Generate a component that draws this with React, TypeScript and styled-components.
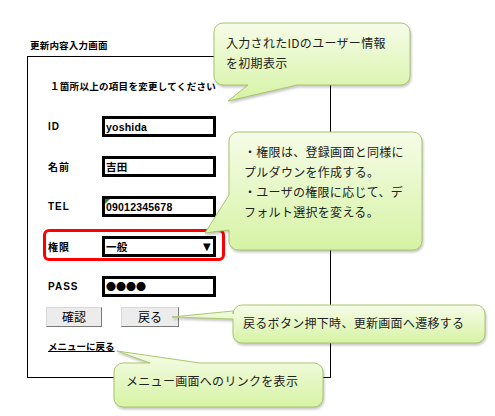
import React from "react";
import styled, { createGlobalStyle } from "styled-components";

const GlobalStyle = createGlobalStyle`
  html, body {
    margin: 0;
    padding: 0;
    background: #fff;
  }
  body {
    font-family: "Noto Sans CJK JP", "Liberation Sans", sans-serif;
    color: #000;
  }
`;

const Page = styled.div`
  position: relative;
  width: 495px;
  height: 416px;
  overflow: hidden;
  padding-left: 27px;
  box-sizing: border-box;
  background: #fff;
`;

const ScreenTitle = styled.div`
  margin-top: 39px;
  margin-bottom: 5px;
  padding-left: 3px;
  height: 12px;
  line-height: 12px;
  font-size: 9.5px;
  font-weight: 700;
  letter-spacing: 0.2px;
`;

const Panel = styled.div`
  width: 304px;
  box-sizing: border-box;
  border: 1px solid #000;
  padding: 22px 0 22px 20px;
`;

const Notice = styled.div`
  padding-left: 2px;
  height: 14px;
  line-height: 14px;
  font-size: 9.5px;
  font-weight: 700;
  letter-spacing: 0.3px;
  white-space: nowrap;
`;

const FormRow = styled.div<{ $first?: boolean }>`
  position: relative;
  display: flex;
  align-items: center;
  width: 168px;
  height: 21px;
  margin-top: ${(p) => (p.$first ? "23px" : "19px")};
`;

const Label = styled.span`
  width: 54px;
  font-size: 10px;
  font-weight: 700;
  letter-spacing: 1px;
  font-family: "Liberation Sans", "Noto Sans CJK JP", sans-serif;
`;

const Field = styled.div<{ $flag?: boolean }>`
  position: relative;
  display: flex;
  align-items: center;
  justify-content: space-between;
  width: 114px;
  height: 21px;
  box-sizing: border-box;
  border: 3px solid #000;
  padding: 0 2px 0 1px;
  font-family: "Liberation Sans", "Noto Sans CJK JP", sans-serif;
  font-size: 10.5px;
  font-weight: 700;
  letter-spacing: 0.2px;

  &::before {
    content: "";
    display: ${(p) => (p.$flag ? "block" : "none")};
    position: absolute;
    left: 0;
    top: 0;
    border-top: 5px solid #1e8a2e;
    border-right: 5px solid transparent;
  }
`;

const Dots = styled.span`
  font-family: "Noto Sans CJK JP", sans-serif;
  font-size: 10px;
  letter-spacing: 0;
`;

const Arrow = styled.span`
  font-size: 10px;
  line-height: 1;
  font-family: "DejaVu Sans", sans-serif;
`;

const Highlight = styled.div`
  position: absolute;
  left: -5px;
  top: -7px;
  width: 182px;
  height: 32px;
  box-sizing: border-box;
  border: 3px solid #ff0000;
  border-radius: 6px;
  pointer-events: none;
`;

const ButtonRow = styled.div`
  display: flex;
  gap: 19px;
  margin: 10px 0 0 -2px;
`;

const Button = styled.button<{ $w: number }>`
  width: ${(p) => p.$w}px;
  height: 20px;
  padding: 0;
  box-sizing: border-box;
  background: #ececec;
  border: 1px solid;
  border-color: #d8d8d8 #7a7a7a #7a7a7a #d8d8d8;
  font-family: "Noto Sans CJK JP", sans-serif;
  font-size: 12px;
  line-height: 18px;
  color: #000;
`;

const BackLink = styled.a`
  display: inline-block;
  margin-top: 12px;
  height: 14px;
  line-height: 14px;
  font-size: 9.5px;
  font-weight: 700;
  color: #000;
  text-decoration: underline;
`;

/* ---------- callouts ---------- */

type Tail = {
  side: "top" | "bottom" | "left";
  from: number;
  to: number;
  tip: [number, number];
};

const bubblePath = (w: number, h: number, r: number, t: Tail) => {
  const [tx, ty] = t.tip;
  let d = `M ${r} 0`;
  if (t.side === "top") d += ` H ${t.from} L ${tx} ${ty} L ${t.to} 0`;
  d += ` H ${w - r} A ${r} ${r} 0 0 1 ${w} ${r} V ${h - r} A ${r} ${r} 0 0 1 ${w - r} ${h}`;
  if (t.side === "bottom") d += ` H ${t.to} L ${tx} ${ty} L ${t.from} ${h}`;
  d += ` H ${r} A ${r} ${r} 0 0 1 0 ${h - r}`;
  if (t.side === "left") d += ` V ${t.to} L ${tx} ${ty} L 0 ${t.from}`;
  d += ` V ${r} A ${r} ${r} 0 0 1 ${r} 0 Z`;
  return d;
};

const CalloutBox = styled.div<{ $x: number; $y: number; $w: number; $h: number }>`
  position: absolute;
  left: ${(p) => p.$x}px;
  top: ${(p) => p.$y}px;
  width: ${(p) => p.$w}px;
  height: ${(p) => p.$h}px;
`;

const CalloutShape = styled.svg`
  position: absolute;
  left: 0;
  top: 0;
  overflow: visible;
  filter: drop-shadow(1px 2px 1.2px rgba(0, 0, 0, 0.22));
`;

const CalloutText = styled.div<{ $pad: string }>`
  position: relative;
  padding: ${(p) => p.$pad};
  font-family: "Noto Sans CJK JP", sans-serif;
  font-size: 12px;
  line-height: 20px;
  letter-spacing: 0.3px;
  color: #222;
  white-space: nowrap;
`;

type CalloutProps = {
  id: string;
  x: number;
  y: number;
  w: number;
  h: number;
  pad: string;
  tail: Tail;
  children: React.ReactNode;
};

const Callout = ({ id, x, y, w, h, pad, tail, children }: CalloutProps) => (
  <CalloutBox $x={x} $y={y} $w={w} $h={h}>
    <CalloutShape width={w} height={h}>
      <defs>
        <linearGradient id={id} x1="0" y1="0" x2="0" y2="1">
          <stop offset="0" stopColor="#f6fce8" />
          <stop offset="1" stopColor="#d6f3a4" />
        </linearGradient>
      </defs>
      <path
        d={bubblePath(w, h, 9, tail)}
        fill={`url(#${id})`}
        stroke="#a8c66c"
        strokeWidth="1"
      />
    </CalloutShape>
    <CalloutText $pad={pad}>{children}</CalloutText>
  </CalloutBox>
);

const App = (): JSX.Element => {
  return (
    <Page>
      <GlobalStyle />
      <ScreenTitle>更新内容入力画面</ScreenTitle>
      <Panel>
        <Notice>１箇所以上の項目を変更してください</Notice>
        <FormRow $first>
          <Label>ID</Label>
          <Field>yoshida</Field>
        </FormRow>
        <FormRow>
          <Label>名前</Label>
          <Field>吉田</Field>
        </FormRow>
        <FormRow>
          <Label>TEL</Label>
          <Field $flag>09012345678</Field>
        </FormRow>
        <FormRow>
          <Label>権限</Label>
          <Field>
            一般
            <Arrow>▼</Arrow>
          </Field>
          <Highlight />
        </FormRow>
        <FormRow>
          <Label>PASS</Label>
          <Field>
            <Dots>●●●●</Dots>
          </Field>
        </FormRow>
        <ButtonRow>
          <Button $w={56}>確認</Button>
          <Button $w={58}>戻る</Button>
        </ButtonRow>
        <BackLink>メニューに戻る</BackLink>
      </Panel>

      <Callout
        id="fillA"
        x={214}
        y={23}
        w={196}
        h={62}
        pad="10px 0 0 12px"
        tail={{ side: "bottom", from: 34, to: 83, tip: [14, 78] }}
      >
        入力されたIDのユーザー情報
        <br />
        を初期表示
      </Callout>
      <Callout
        id="fillB"
        x={229}
        y={132}
        w={193}
        h={118}
        pad="10px 0 0 15px"
        tail={{ side: "left", from: 63, to: 98, tip: [-24, 101] }}
      >
        ・権限は、登録画面と同様に
        <br />
        プルダウンを作成する。
        <br />
        ・ユーザの権限に応じて、デ
        <br />
        フォルト選択を変える。
      </Callout>
      <Callout
        id="fillC"
        x={233}
        y={305}
        w={252}
        h={38}
        pad="8px 0 0 10px"
        tail={{ side: "left", from: 6, to: 14, tip: [-61, 12] }}
      >
        戻るボタン押下時、更新画面へ遷移する
      </Callout>
      <Callout
        id="fillD"
        x={114}
        y={363}
        w={209}
        h={44}
        pad="8px 0 0 12px"
        tail={{ side: "top", from: 36, to: 86, tip: [3, -12] }}
      >
        メニュー画面へのリンクを表示
      </Callout>
    </Page>
  );
};

export default App;
